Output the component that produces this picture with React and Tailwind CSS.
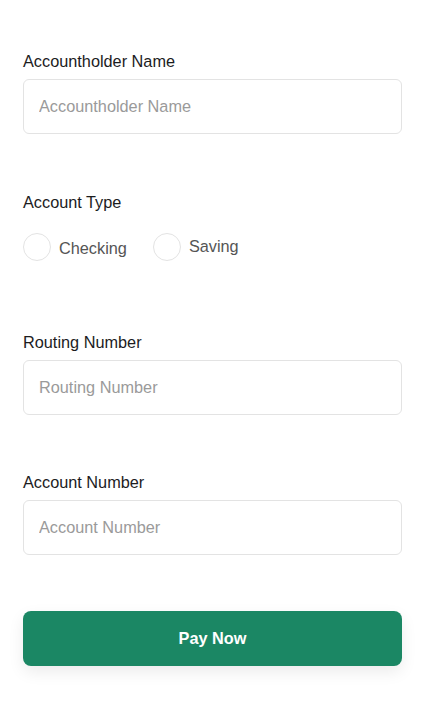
export default function App() {
  const font = { fontFamily: '"Liberation Sans", Arial, sans-serif' };

  const Field = ({ label, className = "" }) => (
    <div className={className}>
      <div className="text-[16.3px] leading-[25px] text-[#1c1c1e]">{label}</div>
      <input
        placeholder={label}
        className="mt-[5px] block w-full h-[55px] rounded-[6px] border border-[#e3e3e3] bg-white px-[15px] text-[16.3px] text-[#333] placeholder:text-[#9a9a9a] outline-none"
      />
    </div>
  );

  return (
    <div className="min-h-[712px] bg-white pl-[23px] pr-[21px] pt-[49px]" style={font}>
      <Field label="Accountholder Name" />

      <div className="mt-[56px]">
        <div className="text-[16.3px] leading-[25px] text-[#1c1c1e]">Account Type</div>
        <div className="mt-[18px] flex items-center">
          <label className="flex items-center">
            <span className="h-[28px] w-[28px] rounded-full border border-[#e3e3e3]" />
            <span className="ml-[8px] text-[16.3px] text-[#555] translate-y-[1px]">Checking</span>
          </label>
          <label className="ml-[26px] flex items-center">
            <span className="h-[28px] w-[28px] rounded-full border border-[#e3e3e3]" />
            <span className="ml-[8px] text-[16.3px] text-[#555] -translate-y-[1px]">Saving</span>
          </label>
        </div>
      </div>

      <Field label="Routing Number" className="mt-[69px]" />
      <Field label="Account Number" className="mt-[55px]" />

      <button className="mt-[56px] h-[55px] w-full rounded-[8px] bg-[#1b8764] text-[16.3px] font-bold text-white shadow-[0_6px_16px_rgba(0,0,0,0.08)]">
        Pay Now
      </button>
    </div>
  );
}
